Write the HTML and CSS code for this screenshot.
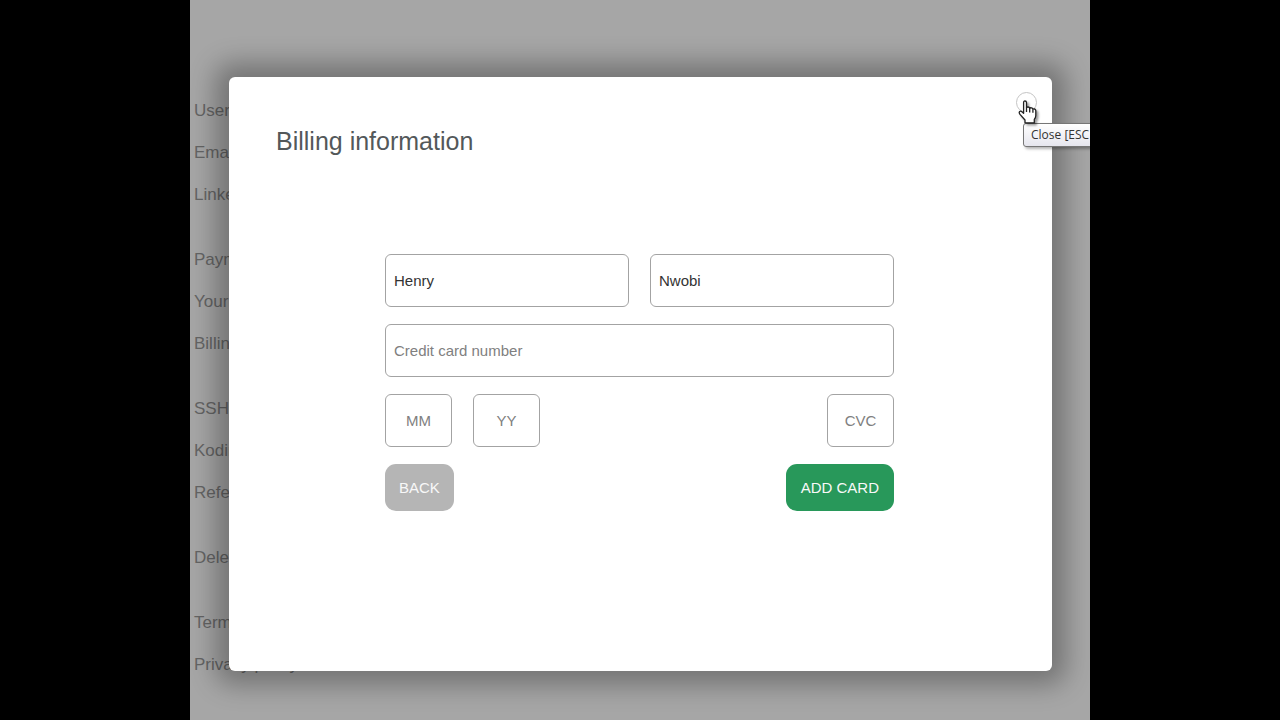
FILE: index.html
```
<!DOCTYPE html>
<html lang="en">
<head>
<meta charset="utf-8">
<meta name="viewport" content="width=device-width, initial-scale=1">
<title>Billing information</title>
<link rel="stylesheet" href="styles.css">
</head>
<body>
<div class="stage">
	<main class="settings">
		<ul>
			<li>Username</li>
			<li>Email</li>
			<li>Linked accounts</li>
		</ul>
		<ul>
			<li>Payment</li>
			<li>Your plan</li>
			<li>Billing</li>
		</ul>
		<ul>
			<li>SSH keys</li>
			<li>Koding</li>
			<li>Referral</li>
		</ul>
		<ul>
			<li>Delete account</li>
		</ul>
		<ul>
			<li>Terms of service</li>
			<li>Privacy policy</li>
		</ul>
	</main>

	<section class="modal" role="dialog" aria-labelledby="title">
		<button type="button" class="close" aria-label="Close"></button>
		<h1 id="title">Billing information</h1>
		<form class="card-form">
			<div class="row">
				<input type="text" aria-label="First name" value="Henry">
				<input type="text" aria-label="Last name" value="Nwobi">
			</div>
			<div class="row">
				<input type="text" aria-label="Credit card number" placeholder="Credit card number">
			</div>
			<div class="row">
				<input type="text" class="short" aria-label="Month" placeholder="MM">
				<input type="text" class="short" aria-label="Year" placeholder="YY">
				<input type="text" class="short last" aria-label="CVC" placeholder="CVC">
			</div>
			<div class="row">
				<button type="button" class="btn">BACK</button>
				<button type="button" class="btn green last">ADD CARD</button>
			</div>
		</form>
		<div class="tooltip" role="tooltip">Close [ESC</div>
		<svg class="hand" viewBox="0 0 20 25" width="20" height="25" aria-hidden="true">
			<path d="M5.6 2.5Q5.6 1 7 1T8.5 2.5V7.6Q9 6.9 10.2 7T11.7 8.3Q12.2 7.6 13.4 7.8T14.9 9.2Q15.4 8.7 16.5 9T17.8 10.6V15.5Q17.8 17.5 16.3 19.3V22.8H7V20L2 14.4Q.6 12.4 1.7 11.5T4.2 12L5.6 13.3Z"/>
			<path class="fingers" d="M8.5 7.6V12M11.7 8.3V12.4M14.9 9.2V12.8"/>
		</svg>
	</section>
</div>
</body>
</html>
```

FILE: styles.css
```
* {
	box-sizing: border-box;
}
body {
	margin: 0;
	background: #000;
	font-family: Arial, "Liberation Sans", sans-serif;
}
.stage {
	position: relative;
	max-width: 900px;
	min-height: 100vh;
	margin: 0 auto;
	padding: 90px 4px 0;
	background: #a6a6a6;
	overflow: hidden;
}

/* page behind the dialog */
.settings ul {
	list-style: none;
	margin: 0 0 23px;
	padding: 0;
}
.settings li {
	line-height: 42px;
	font-size: 17px;
	color: #646464;
}
.settings ul:last-child {
	margin: 0;
}

/* dialog */
.modal {
	position: absolute;
	top: 77px;
	left: 39px;
	right: 38px;
	padding: 48px 49px 160px 47px;
	background: #fff;
	border-radius: 6px;
	box-shadow: 0 0 26px 14px rgba(0, 0, 0, .3);
}
.modal h1 {
	margin: 0;
	font-size: 25px;
	line-height: 32px;
	font-weight: normal;
	color: #53585a;
}
.close {
	position: absolute;
	top: 15px;
	right: 15px;
	width: 21px;
	height: 21px;
	padding: 0;
	border: 1px solid #c4c4c4;
	border-radius: 50%;
	background: #fff;
}

/* card form */
.card-form {
	display: flex;
	flex-direction: column;
	gap: 17px;
	max-width: 509px;
	margin: 97px auto 0;
}
.row {
	display: flex;
	gap: 21px;
}
.row input {
	flex: 1;
	min-width: 0;
	height: 53px;
	padding: 0 8px;
	border: 1px solid #a3a3a3;
	border-radius: 6px;
	background: #fff;
	font-family: inherit;
	font-size: 15px;
	color: #333;
}
.row input::placeholder {
	color: #808080;
	opacity: 1;
}
.row input.short {
	flex: 0 0 67px;
	text-align: center;
}
.row .last {
	margin-left: auto;
}
.btn {
	height: 47px;
	padding: 0 14px;
	border: 0;
	border-radius: 11px;
	background: #b5b5b5;
	font-family: inherit;
	font-size: 15px;
	color: #f8f8f8;
}
.btn.green {
	padding: 0 15px;
	background: #28985a;
}

/* tooltip and pointer */
.tooltip {
	position: absolute;
	top: 46px;
	left: calc(100% - 29px);
	padding: 0 7px;
	border: 1px solid #767676;
	border-radius: 3px;
	background: linear-gradient(#fff, #e6e6ee);
	box-shadow: 2px 2px 3px rgba(0, 0, 0, .3);
	font-family: "Segoe UI", "Open Sans", sans-serif;
	font-size: 12px;
	line-height: 22px;
	color: #333;
	white-space: nowrap;
}
.hand {
	position: absolute;
	top: 23px;
	right: 14px;
	fill: #fff;
	stroke: #222;
	stroke-width: 1.3;
	stroke-linejoin: round;
	filter: drop-shadow(2px 2px 1px rgba(0, 0, 0, .4));
}
.hand .fingers {
	fill: none;
}
```
